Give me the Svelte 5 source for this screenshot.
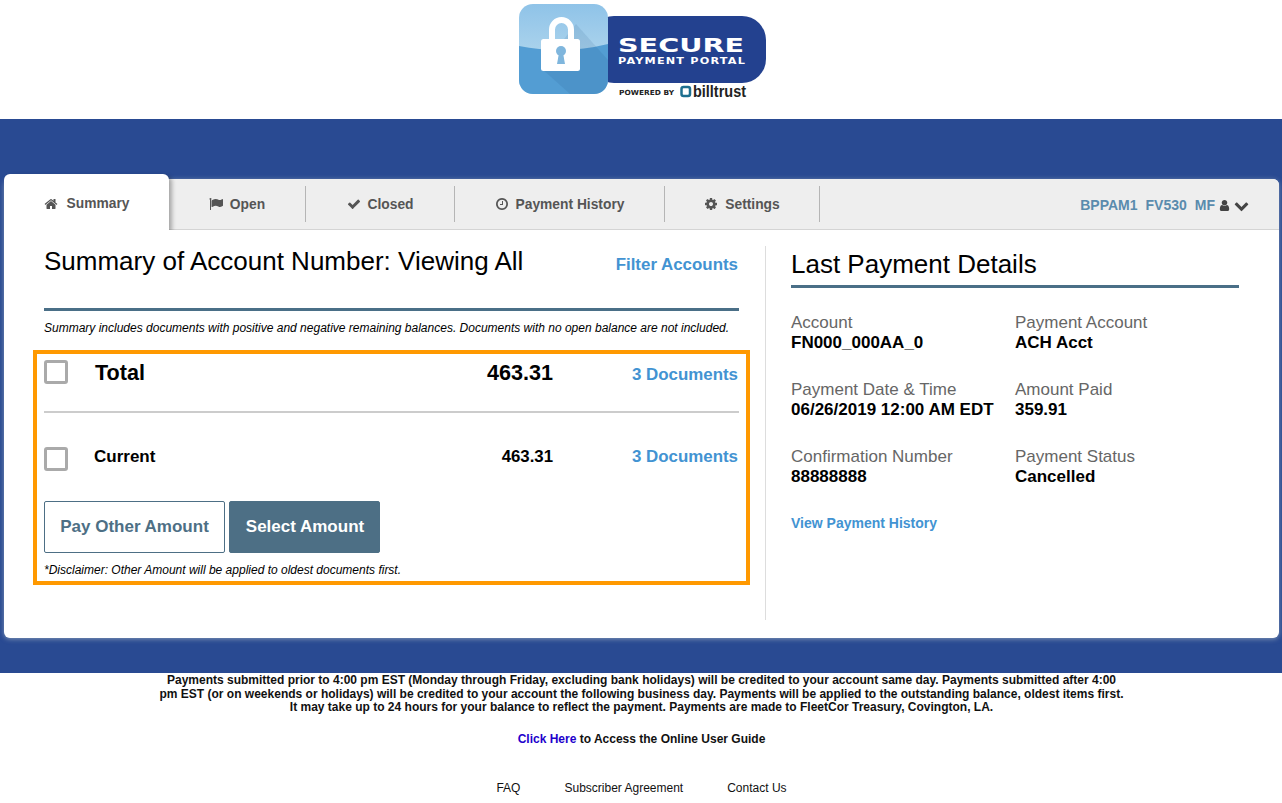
<script>
	const icons = {
		home: 'M1472 992v480q0 26-19 45t-45 19h-384v-384h-256v384h-384q-26 0-45-19t-19-45v-480q0-1 .5-3t.5-3l575-474 575 474q1 2 1 6zm223-69l-62 74q-8 9-21 11h-3q-13 0-21-7l-692-577-692 577q-12 8-24 7-13-2-21-11l-62-74q-8-10-7-23.5t11-21.5l719-599q32-26 76-26t76 26l244 204v-195q0-14 9-23t23-9h192q14 0 23 9t9 23v408l219 182q10 8 11 21.5t-7 23.5z',
		flag: 'M320 256q0 72-64 110v1266q0 13-9.5 22.5t-22.5 9.5h-64q-13 0-22.5-9.5t-9.5-22.5v-1266q-64-38-64-110 0-53 37.5-90.5t90.5-37.5 90.5 37.5 37.5 90.5zm1472 64v763q0 25-12.5 38.5t-39.5 27.5q-215 116-369 116-61 0-123.5-22t-108.5-48-115.5-48-142.5-22q-192 0-464 146-17 9-33 9-26 0-45-19t-19-45v-742q0-32 31-55 21-14 79-43 236-120 421-120 107 0 200 29t219 88q38 19 88 19 54 0 117.5-21t110-47 88-47 54.5-21q26 0 45 19t19 45z',
		check: 'M1671 566q0 40-28 68l-724 724-136 136q-28 28-68 28t-68-28l-136-136-362-362q-28-28-28-68t28-68l136-136q28-28 68-28t68 28l294 295 656-657q28-28 68-28t68 28l136 136q28 28 28 68z',
		clock: 'M1024 544v448q0 14-9 23t-23 9h-320q-14 0-23-9t-9-23v-64q0-14 9-23t23-9h224v-352q0-14 9-23t23-9h64q14 0 23 9t9 23zm416 352q0-148-73-273t-198-198-273-73-273 73-198 198-73 273 73 273 198 198 273 73 273-73 198-198 73-273zm224 0q0 209-103 385.5t-279.5 279.5-385.5 103-385.5-103-279.5-279.5-103-385.5 103-385.5 279.5-279.5 385.5-103 385.5 103 279.5 279.5 103 385.5z',
		gear: 'M1152 896q0-106-75-181t-181-75-181 75-75 181 75 181 181 75 181-75 75-181zm512-109v222q0 12-8 23t-20 13l-185 28q-19 54-39 91 35 50 107 138 10 12 10 25t-9 23q-27 37-99 108t-94 71q-12 0-26-9l-138-108q-44 23-91 38-16 136-29 186-7 28-36 28h-222q-14 0-24.5-8.5t-11.5-21.5l-28-184q-49-16-90-37l-141 107q-10 9-25 9-14 0-25-11-126-114-165-168-7-10-7-23 0-12 8-23 15-21 51-66.5t54-70.5q-27-50-41-99l-183-27q-13-2-21-12.5t-8-23.5v-222q0-12 8-23t19-13l186-28q14-46 39-92-40-57-107-138-10-12-10-24 0-10 9-23 26-36 98.5-107.5t94.5-71.5q13 0 26 10l138 107q44-23 91-38 16-136 29-186 7-28 36-28h222q14 0 24.5 8.5t11.5 21.5l28 184q49 16 90 37l142-107q9-9 24-9 13 0 25 10 129 119 165 170 7 8 7 22 0 12-8 23-15 21-51 66.5t-54 70.5q26 50 41 98l183 28q13 2 21 12.5t8 23.5z',
		user: 'M1536 1399q0 109-62.5 187t-150.5 78h-854q-88 0-150.5-78t-62.5-187q0-85 8.5-160.5t31.5-152 58.5-131 94-89 134.5-34.5q131 128 313 128t313-128q76 0 134.5 34.5t94 89 58.5 131 31.5 152 8.5 160.5zm-256-887q0 159-112.5 271.5t-271.5 112.5-271.5-112.5-112.5-271.5 112.5-271.5 271.5-112.5 271.5 112.5 112.5 271.5z',
		chevron: 'M1683 808l-742 741q-19 19-45 19t-45-19l-742-741q-19-19-19-45.5t19-45.5l166-165q19-19 45-19t45 19l531 531 531-531q19-19 45-19t45 19l166 165q19 19 19 45.5t-19 45.5z'
	};

	const tabs = [
		{ label: 'Open', icon: icons.flag, width: 137 },
		{ label: 'Closed', icon: icons.check, width: 149 },
		{ label: 'Payment History', icon: icons.clock, width: 210 },
		{ label: 'Settings', icon: icons.gear, width: 155 }
	];

	const details = [
		['Account', 'FN000_000AA_0'],
		['Payment Account', 'ACH Acct'],
		['Payment Date & Time', '06/26/2019 12:00 AM EDT'],
		['Amount Paid', '359.91'],
		['Confirmation Number', '88888888'],
		['Payment Status', 'Cancelled']
	];
</script>

<header class="logo-bar">
	<svg class="logo" viewBox="518 0 250 100" width="250" height="100">
		<defs>
			<linearGradient id="sky" x1="0" y1="0" x2="0" y2="1">
				<stop offset="0" stop-color="#8fc3e8" />
				<stop offset="0.5" stop-color="#a9d2ec" />
			</linearGradient>
			<clipPath id="square"><rect x="519" y="4" width="89" height="90" rx="14" /></clipPath>
		</defs>
		<rect x="590" y="16" width="176" height="67" rx="24" fill="#23418f" />
		<g clip-path="url(#square)">
			<rect x="519" y="4" width="89" height="90" fill="url(#sky)" />
			<path d="M519 46q45 9 89-2v50h-89z" fill="#539dd3" />
			<path d="M576 24l32 36v34h-38l-29-26z" fill="#1e5082" fill-opacity="0.12" />
		</g>
		<path d="M552 40v-10.500a9.500 9.500 0 0 1 19 0v10.500" fill="none" stroke="#fff" stroke-width="6" />
		<rect x="541" y="39" width="39" height="32" rx="2.500" fill="#fff" />
		<circle cx="561" cy="51" r="5" fill="#7fb6dd" />
		<path d="M559 53h4l2 11h-8z" fill="#7fb6dd" />
		<text class="secure" x="618" y="52" textLength="126" lengthAdjust="spacingAndGlyphs">SECURE</text>
		<text class="portal" x="618" y="64" textLength="128" lengthAdjust="spacingAndGlyphs">PAYMENT PORTAL</text>
		<text class="powered" x="619" y="95" textLength="55" lengthAdjust="spacingAndGlyphs">POWERED BY</text>
		<rect x="681.500" y="87" width="8.500" height="9" rx="2" fill="none" stroke="#1d6f8f" stroke-width="2.500" />
		<text class="billtrust" x="693" y="97" textLength="53" lengthAdjust="spacingAndGlyphs">billtrust</text>
	</svg>
</header>

<main class="band">
	<div class="card">
		<nav class="tabs">
			<div class="tab active">
				<svg class="icon" viewBox="0 0 1792 1792"><path d={icons.home} /></svg>
				<span>Summary</span>
			</div>
			{#each tabs as tab}
				<div class="tab" style="width: {tab.width}px">
					<svg class="icon" viewBox="0 0 1792 1792"><path d={tab.icon} /></svg>
					<span>{tab.label}</span>
				</div>
			{/each}
			<div class="account">
				<span>BPPAM1</span>
				<span>FV530</span>
				<span>MF</span>
				<svg class="icon user" viewBox="0 0 1792 1792"><path d={icons.user} /></svg>
				<svg class="icon chevron" viewBox="0 0 1792 1792"><path d={icons.chevron} /></svg>
			</div>
		</nav>

		<div class="content">
			<section class="summary">
				<div class="summary-head">
					<h1>Summary of Account Number: Viewing All</h1>
					<a class="link filter">Filter Accounts</a>
				</div>
				<p class="note">Summary includes documents with positive and negative remaining balances. Documents with no open balance are not included.</p>

				<div class="selection">
					<div class="row total">
						<span class="checkbox"></span>
						<span class="row-label">Total</span>
						<span class="row-amount">463.31</span>
						<a class="link docs">3 Documents</a>
					</div>
					<div class="row current">
						<span class="checkbox"></span>
						<span class="row-label">Current</span>
						<span class="row-amount">463.31</span>
						<a class="link docs">3 Documents</a>
					</div>
					<div class="actions">
						<button class="btn outline">Pay Other Amount</button>
						<button class="btn solid">Select Amount</button>
					</div>
					<p class="disclaimer">*Disclaimer: Other Amount will be applied to oldest documents first.</p>
				</div>
			</section>

			<aside class="last-payment">
				<h2>Last Payment Details</h2>
				<div class="detail-grid">
					{#each details as [label, value]}
						<div class="detail">
							<span class="detail-label">{label}</span>
							<span class="detail-value">{value}</span>
						</div>
					{/each}
				</div>
				<a class="link history">View Payment History</a>
			</aside>
		</div>
	</div>
</main>

<footer class="foot">
	<p class="terms">Payments submitted prior to 4:00 pm EST (Monday through Friday, excluding bank holidays) will be credited to your account same day. Payments submitted after 4:00 pm EST (or on weekends or holidays) will be credited to your account the following business day. Payments will be applied to the outstanding balance, oldest items first. It may take up to 24 hours for your balance to reflect the payment. Payments are made to FleetCor Treasury, Covington, LA.</p>
	<p class="guide"><a class="guide-link">Click Here</a> to Access the Online User Guide</p>
	<div class="foot-links">
		<span>FAQ</span>
		<span>Subscriber Agreement</span>
		<span>Contact Us</span>
	</div>
</footer>

<style>
	:global(body) {
		font-family: "Liberation Sans", Arial, sans-serif;
		background: #fff;
		color: #000;
	}
	p, h1, h2 {
		margin: 0;
		font-weight: 400;
	}
	.logo-bar {
		height: 119px;
		display: flex;
		justify-content: center;
		padding-left: 4px;
		box-sizing: border-box;
	}
	.logo {
		display: block;
	}
	.secure {
		font: 700 20px "DejaVu Sans", sans-serif;
		fill: #fff;
	}
	.portal {
		font: 700 9.500px "DejaVu Sans", sans-serif;
		letter-spacing: 1px;
		fill: #fff;
	}
	.powered {
		font: 700 7px "DejaVu Sans", sans-serif;
		fill: #222;
	}
	.billtrust {
		font: 700 17px "Liberation Sans", sans-serif;
		fill: #222;
	}
	.band {
		background: #294a92;
		height: 554px;
		padding: 60px 3px 0 4px;
		box-sizing: border-box;
	}
	.card {
		background: #fff;
		height: 459px;
		border-radius: 6px;
		box-shadow: 0 1px 5px rgba(175, 190, 200, 0.65);
	}
	.tabs {
		display: flex;
		align-items: center;
		height: 51px;
		background: #eee;
		border-bottom: 1px solid #d4d4d4;
		border-radius: 6px 6px 0 0;
		box-sizing: border-box;
	}
	.tab {
		display: flex;
		align-items: center;
		justify-content: center;
		gap: 7px;
		height: 36px;
		border-right: 1px solid #b5b5b5;
		box-sizing: border-box;
		font-size: 13.800px;
		font-weight: 700;
		color: #555;
	}
	.tab.active {
		width: 165px;
		height: 56px;
		margin-top: -5px;
		padding: 3px 0 0 0;
		gap: 9px;
		align-self: flex-start;
		background: #fff;
		border: 0;
		border-radius: 6px 6px 0 0;
		box-shadow: 3px 2px 4px rgba(0, 0, 0, 0.3);
		clip-path: inset(-6px -8px 0 -6px);
	}
	.icon {
		width: 14px;
		height: 14px;
		fill: #555;
		flex: none;
	}
	.account {
		margin-left: auto;
		padding: 2px 30px 0 0;
		display: flex;
		align-items: center;
		gap: 8px;
		font-size: 14px;
		font-weight: 700;
		color: #5a8bad;
	}
	.account .user {
		margin-left: -5px;
		width: 13px;
		height: 15px;
		fill: #444;
	}
	.account .chevron {
		margin-left: -5px;
		width: 15px;
		height: 15px;
		fill: #444;
	}
	.content {
		display: flex;
		padding: 16px 40px 0;
	}
	.summary {
		width: 695px;
	}
	.summary-head {
		display: flex;
		justify-content: space-between;
		align-items: flex-start;
		height: 62px;
		border-bottom: 3px solid #4a6f87;
	}
	h1 {
		font-size: 26px;
		line-height: 30px;
	}
	.link {
		color: #4293d2;
		font-weight: 700;
	}
	.filter {
		font-size: 16.900px;
		margin: 9px 1px 0 0;
	}
	.note {
		font-size: 12px;
		font-style: italic;
		margin-top: 10px;
		line-height: 14px;
	}
	.selection {
		margin: 15px -11px 0 -11px;
		border: 4px solid #f90;
		height: 235px;
		padding: 0 7px 0 7px;
		box-sizing: border-box;
	}
	.row {
		display: grid;
		grid-template-columns: 50px 1fr auto 185px;
		font-weight: 700;
	}
	.row.total {
		height: 55px;
		padding-bottom: 2px;
		font-size: 21.600px;
		border-bottom: 2px solid #ccc;
		box-sizing: content-box;
		align-items: start;
	}
	.row.current {
		height: 88px;
		font-size: 17px;
		align-items: center;
	}
	.checkbox {
		display: block;
		box-sizing: content-box;
		width: 18px;
		height: 18px;
		border: 3px solid #aaa;
		border-radius: 3px;
		background: #fff;
	}
	.row.total .checkbox {
		margin-top: 6px;
	}
	.row.current .checkbox {
		margin-top: 4px;
	}
	.row.total .row-label {
		margin: 6px 0 0 1px;
		line-height: 26px;
	}
	.row.total .row-amount {
		margin-top: 6px;
		line-height: 26px;
	}
	.docs {
		font-size: 16.900px;
		text-align: right;
		padding-right: 1px;
	}
	.row-amount {
		margin-right: 1px;
	}
	.row.current .row-amount {
		font-size: 16.800px;
	}
	.row.total .docs {
		margin-top: 11px;
	}
	.actions {
		display: flex;
		gap: 4px;
	}
	.btn {
		height: 52px;
		font: 700 17px "Liberation Sans", Arial, sans-serif;
		border-radius: 2px;
		border: 1px solid #4d6f85;
		padding: 0;
		cursor: pointer;
	}
	.outline {
		width: 181px;
		background: #fff;
		color: #4d6f85;
	}
	.solid {
		width: 151px;
		padding-left: 1px;
		background: #4d6f85;
		color: #fff;
	}
	.disclaimer {
		font-size: 12px;
		font-style: italic;
		margin-top: 10px;
		line-height: 14px;
	}
	.last-payment {
		margin-left: 26px;
		padding-left: 25px;
		width: 448px;
		border-left: 1px solid #ddd;
		height: 374px;
		box-sizing: content-box;
	}
	h2 {
		font-size: 26px;
		line-height: 30px;
		padding-top: 3px;
		height: 36px;
		border-bottom: 3px solid #4a6f87;
	}
	.detail-grid {
		display: grid;
		grid-template-columns: 224px 224px;
		row-gap: 27px;
		margin-top: 25px;
	}
	.detail {
		display: flex;
		flex-direction: column;
		font-size: 17px;
		line-height: 20px;
	}
	.detail-label {
		color: #666;
	}
	.detail-value {
		font-weight: 700;
	}
	.history {
		display: block;
		font-size: 14px;
		margin-top: 28px;
	}
	.foot {
		text-align: center;
		font-size: 12px;
		color: #111;
		padding-left: 1px;
	}
	.terms {
		width: 966px;
		margin: 0 auto;
		padding-top: 1px;
		font-weight: 700;
		line-height: 13.600px;
	}
	.guide {
		margin-top: 17px;
		font-weight: 700;
	}
	.guide-link {
		color: #2200cc;
	}
	.foot-links {
		display: flex;
		justify-content: center;
		gap: 44px;
		margin-top: 35px;
	}
</style>
